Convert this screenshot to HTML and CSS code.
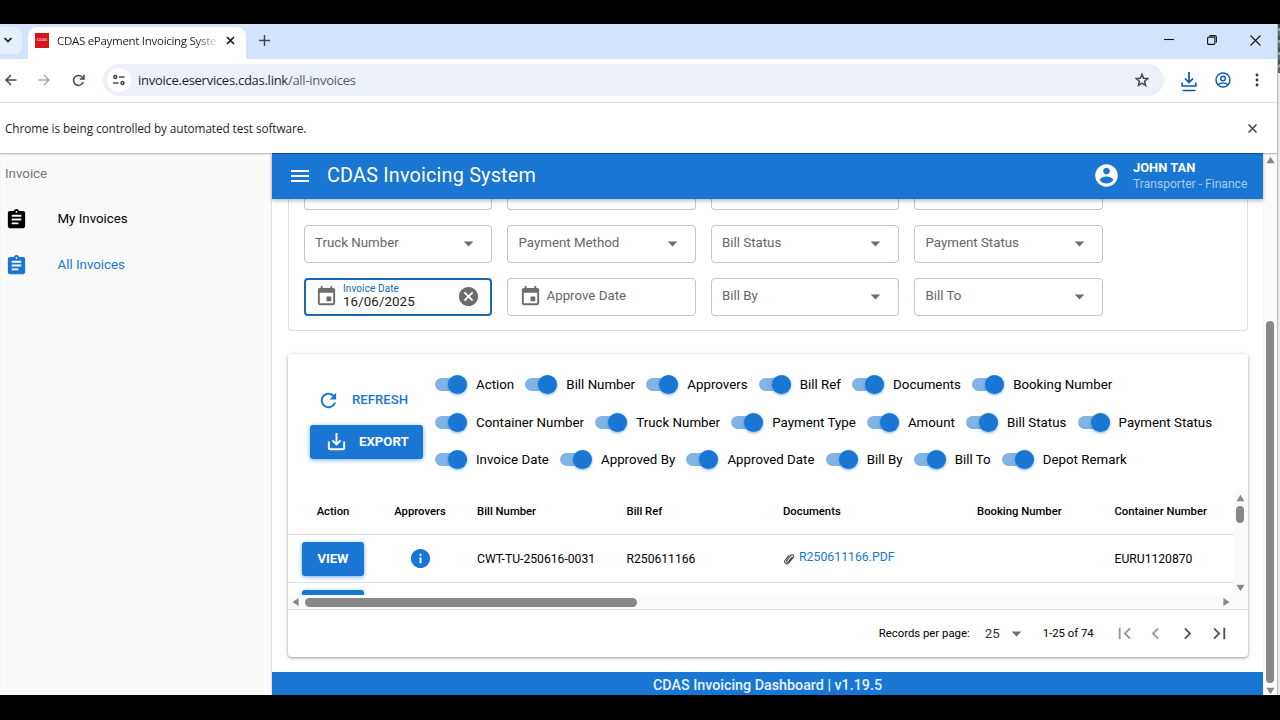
FILE: index.html
```
<!DOCTYPE html>
<html lang="en">
<head>
  <meta charset="utf-8">
  <title>CDAS ePayment Invoicing System</title>
  <link rel="stylesheet" href="styles.css">
</head>
<body>
<!-- shared icons -->
<svg class="defs">
  <symbol id="clip" viewBox="0 0 24 24"><path d="M19 3h-4.180C14.400 1.840 13.300 1 12 1c-1.300 0-2.400.840-2.820 2H5c-1.100 0-2 .900-2 2v14c0 1.100.900 2 2 2h14c1.100 0 2-.900 2-2V5c0-1.100-.900-2-2-2zm-7 0c.550 0 1 .450 1 1s-.450 1-1 1-1-.450-1-1 .450-1 1-1zm2 14H7v-2h7v2zm3-4H7v-2h10v2zm0-4H7V7h10v2z"/></symbol>
  <symbol id="event" viewBox="0 0 24 24"><path d="M17 12h-5v5h5v-5zM16 1v2H8V1H6v2H5c-1.110 0-1.990.900-1.990 2L3 19c0 1.100.890 2 2 2h14c1.100 0 2-.900 2-2V5c0-1.100-.900-2-2-2h-1V1h-2zm3 18H5V8h14v11z"/></symbol>
  <symbol id="drop" viewBox="0 0 24 24"><path d="M7 10l5 5 5-5z"/></symbol>
  <symbol id="tri" viewBox="0 0 10 8"><path d="M5 .5L9.500 7.500H.5z"/></symbol>
</svg>

<div class="window">
  <div class="tabstrip">
    <div class="tabsearch"><svg width="10" height="10" viewBox="0 0 10 10"><path d="M1.500 3L5 6.500 8.500 3" class="ln dark w2"/></svg></div>
    <div class="tab">
      <div class="favicon">CDAS</div>
      <div class="tabtitle">CDAS ePayment Invoicing Syste</div>
      <svg width="9" height="9" viewBox="0 0 9 9"><path d="M1 1l7 7M8 1L1 8" class="ln dark w2"/></svg>
    </div>
    <svg class="plus" width="11" height="11" viewBox="0 0 11 11"><path d="M5.500 0v11M0 5.500h11" class="ln"/></svg>
    <div class="winbtns">
      <svg width="10" height="10" viewBox="0 0 10 10"><path d="M0 4.500h10" class="ln dark w1"/></svg>
      <svg width="10" height="10" viewBox="0 0 10 10"><rect x=".6" y="2.100" width="7.300" height="7.300" rx="1.200" class="ln dark w1"/><path d="M2.500.6H7.400a2 2 0 0 1 2 2V7.500" class="ln dark w1"/></svg>
      <svg width="11" height="11" viewBox="0 0 11 11"><path d="M.5.5l10 10M10.500.5l-10 10" class="ln dark w1"/></svg>
    </div>
  </div>

  <div class="toolbar">
    <svg class="back" width="12" height="12" viewBox="0 0 12 12"><path d="M11.500 6H1M6 1L1 6l5 5" class="ln"/></svg>
    <svg class="fwd" width="12" height="12" viewBox="0 0 12 12"><path d="M.5 6H11M6 1l5 5-5 5" class="ln faint"/></svg>
    <svg class="reload" width="13" height="13" viewBox="0 0 13 13"><path d="M11.300 8A5 5 0 1 1 10.600 3.500L11.800 4.700M12 .8V5H7.800" class="ln"/></svg>
    <div class="omnibox">
      <div class="site"><svg width="14" height="12" viewBox="0 0 14 12"><circle cx="3.300" cy="3" r="1.500" class="ln"/><path d="M7 3h5.500M1 9h5.500" class="ln"/><circle cx="10.500" cy="9" r="1.500" class="ln"/></svg></div>
      <div class="url">invoice.eservices.cdas.link<span>/all-invoices</span></div>
      <svg width="14" height="14" viewBox="0 0 14 14"><path d="M7 1.300l1.600 3.900 4.200.3-3.200 2.700 1 4.100L7 10.100l-3.600 2.200 1-4.100L1.200 5.500l4.200-.3z" class="ln"/></svg>
    </div>
    <svg class="dl" width="16" height="20" viewBox="0 0 16 20"><path d="M8 0v10M4 6.500l4 4 4-4M1.200 10.500V14h13.600v-3.500M1.500 18.500h13" class="ln blue"/></svg>
    <svg class="user" width="16" height="16" viewBox="0 0 16 16"><circle cx="8" cy="8" r="7" class="ln blue thin"/><circle cx="8" cy="6.500" r="2.300" class="ln blue thin"/><path d="M3.300 12.800c2.500-2.600 6.900-2.600 9.400 0" class="ln blue thin"/></svg>
    <svg class="kebab" width="4" height="14" viewBox="0 0 4 14"><circle cx="2" cy="2" r="1.400"/><circle cx="2" cy="7" r="1.400"/><circle cx="2" cy="12" r="1.400"/></svg>
  </div>

  <div class="infobar">
    <span>Chrome is being controlled by automated test software.</span>
    <svg width="9" height="9" viewBox="0 0 9 9"><path d="M.5.5l8 8M8.500.5l-8 8" class="ln"/></svg>
  </div>

  <div class="page">
    <div class="drawer">
      <div class="drawer-head">Invoice</div>
      <div class="nav"><svg><use href="#clip"/></svg>My Invoices</div>
      <div class="nav active"><svg><use href="#clip"/></svg>All Invoices</div>
    </div>

    <div class="main">
      <div class="header">
        <svg class="burger" width="18" height="12" viewBox="0 0 18 12"><path d="M0 1h18M0 6h18M0 11h18"/></svg>
        <div class="title">CDAS Invoicing System</div>
        <svg class="avatar" viewBox="0 0 24 24"><path d="M12 2C6.480 2 2 6.480 2 12s4.480 10 10 10 10-4.480 10-10S17.520 2 12 2zm0 3c1.660 0 3 1.340 3 3s-1.340 3-3 3-3-1.340-3-3 1.340-3 3-3zm0 14.200c-2.500 0-4.710-1.280-6-3.220.030-1.990 4-3.080 6-3.080 1.990 0 5.970 1.090 6 3.080-1.290 1.940-3.500 3.220-6 3.220z"/></svg>
        <div class="who"><b>JOHN TAN</b><span>Transporter - Finance</span></div>
      </div>

      <div class="content">
        <div class="filters">
          <div class="field cut"></div><div class="field cut"></div><div class="field cut"></div><div class="field cut"></div>
          <div class="field"><span>Truck Number</span><svg><use href="#drop"/></svg></div>
          <div class="field"><span>Payment Method</span><svg><use href="#drop"/></svg></div>
          <div class="field"><span>Bill Status</span><svg><use href="#drop"/></svg></div>
          <div class="field"><span>Payment Status</span><svg><use href="#drop"/></svg></div>
          <div class="field focus">
            <svg class="cal"><use href="#event"/></svg>
            <span><small>Invoice Date</small>16/06/2025</span>
            <svg viewBox="0 0 24 24"><path d="M12 2C6.470 2 2 6.470 2 12s4.470 10 10 10 10-4.470 10-10S17.530 2 12 2zm5 13.590L15.590 17 12 13.410 8.410 17 7 15.590 10.590 12 7 8.410 8.410 7 12 10.590 15.590 7 17 8.410 13.410 12 17 15.590z"/></svg>
          </div>
          <div class="field"><svg class="cal"><use href="#event"/></svg><span>Approve Date</span></div>
          <div class="field"><span>Bill By</span><svg><use href="#drop"/></svg></div>
          <div class="field"><span>Bill To</span><svg><use href="#drop"/></svg></div>
        </div>

        <div class="card">
          <div class="top">
            <div class="btns">
              <div class="btn flat"><svg viewBox="0 0 24 24"><path d="M17.650 6.350C16.200 4.900 14.210 4 12 4c-4.420 0-7.990 3.580-7.990 8s3.570 8 7.990 8c3.730 0 6.840-2.550 7.730-6h-2.080c-.820 2.330-3.040 4-5.650 4-3.310 0-6-2.690-6-6s2.690-6 6-6c1.660 0 3.140.690 4.220 1.780L13 11h7V4l-2.350 2.350z"/></svg>REFRESH</div>
              <div class="btn solid"><svg viewBox="0 0 24 24"><path d="M19 12v7H5v-7H3v7c0 1.100.900 2 2 2h14c1.100 0 2-.900 2-2v-7h-2zm-6 .670l2.590-2.580L17 11.500l-5 5-5-5 1.410-1.410L11 12.670V3h2v9.670z"/></svg>EXPORT</div>
            </div>
            <div class="toggles">
              <div class="trow">
                <label class="tg"><i></i>Action</label>
                <label class="tg"><i></i>Bill Number</label>
                <label class="tg"><i></i>Approvers</label>
                <label class="tg"><i></i>Bill Ref</label>
                <label class="tg"><i></i>Documents</label>
                <label class="tg"><i></i>Booking Number</label>
              </div>
              <div class="trow">
                <label class="tg"><i></i>Container Number</label>
                <label class="tg"><i></i>Truck Number</label>
                <label class="tg"><i></i>Payment Type</label>
                <label class="tg"><i></i>Amount</label>
                <label class="tg"><i></i>Bill Status</label>
                <label class="tg"><i></i>Payment Status</label>
              </div>
              <div class="trow">
                <label class="tg"><i></i>Invoice Date</label>
                <label class="tg"><i></i>Approved By</label>
                <label class="tg"><i></i>Approved Date</label>
                <label class="tg"><i></i>Bill By</label>
                <label class="tg"><i></i>Bill To</label>
                <label class="tg"><i></i>Depot Remark</label>
              </div>
            </div>
          </div>

          <div class="tablebox">
            <div class="scroller">
              <table>
                <colgroup><col class="c1"><col class="c2"><col class="c3"><col class="c4"><col class="c5"><col class="c6"><col></colgroup>
                <tr><th class="mid">Action</th><th class="mid">Approvers</th><th>Bill Number</th><th>Bill Ref</th><th>Documents</th><th>Booking Number</th><th>Container Number</th></tr>
                <tr>
                  <td class="mid"><div class="view">VIEW</div></td>
                  <td class="mid"><svg class="info" viewBox="0 0 24 24"><path d="M12 2C6.480 2 2 6.480 2 12s4.480 10 10 10 10-4.480 10-10S17.520 2 12 2zm1 15h-2v-6h2v6zm0-8h-2V7h2v2z"/></svg></td>
                  <td>CWT-TU-250616-0031</td>
                  <td>R250611166</td>
                  <td><div class="doc"><svg width="12" height="13" viewBox="0 0 12 13"><path d="M9.300 4.800L5.400 9.800c-.9 1.100-2.500-.1-1.700-1.200l4.200-5.400c1.300-1.500 3.700.2 2.500 1.900L5.800 11c-1.900 2.200-5.400-.3-3.700-2.800L6 3.200" class="ln w1"/></svg><a>R250611166.PDF</a></div></td>
                  <td></td>
                  <td>EURU1120870</td>
                </tr>
                <tr><td class="mid"><div class="view"></div></td><td></td><td></td><td></td><td></td><td></td><td></td></tr>
              </table>
            </div>
            <div class="vbar"><svg><use href="#tri"/></svg><i></i><svg class="down"><use href="#tri"/></svg></div>
          </div>
          <div class="hbar"><svg class="left"><use href="#tri"/></svg><i></i><svg class="right"><use href="#tri"/></svg></div>
          <div class="pager">
            <span class="rpp">Records per page:</span>
            <span class="n">25</span>
            <svg class="pd"><use href="#drop"/></svg>
            <span class="range">1-25 of 74</span>
            <svg class="pg off" viewBox="0 0 24 24"><path d="M18.410 16.590L13.820 12l4.590-4.590L17 6l-6 6 6 6zM6 6h2v12H6z"/></svg>
            <svg class="pg off" viewBox="0 0 24 24"><path d="M15.410 7.410L14 6l-6 6 6 6 1.410-1.410L10.830 12z"/></svg>
            <svg class="pg" viewBox="0 0 24 24"><path d="M10 6L8.590 7.410 13.170 12l-4.580 4.590L10 18l6-6z"/></svg>
            <svg class="pg" viewBox="0 0 24 24"><path d="M5.590 7.410L10.180 12l-4.590 4.590L7 18l6-6-6-6zM16 6h2v12h-2z"/></svg>
          </div>
        </div>
      </div>
      <div class="footer">CDAS Invoicing Dashboard | v1.19.5</div>
    </div>

    <div class="pagebar"><svg><use href="#tri"/></svg><i></i><svg class="down"><use href="#tri"/></svg></div>
  </div>
</div>
<!-- sliver of the window behind -->
<div class="behind"><i></i></div>
</body>
</html>
```
FILE: styles.css
```
* {box-sizing:border-box;}
body {margin:0; width:1280px; height:720px; overflow:hidden; background:#000; padding:24px 0 25px; display:flex; font-family:Roboto,sans-serif; color:#000;}
svg {flex:none; display:block;}
svg.defs {position:absolute; width:0; height:0;}
.window {width:1277px; height:671px; background:#fff; display:flex; flex-direction:column;}
.behind {width:3px; height:671px; background:#e9e9e9; border-left:1px solid #bbb;}
.behind i {display:block; height:49px; background:repeating-linear-gradient(170deg,#35565c 0 4px,#8ba5a5 4px 7px,#52706f 7px 12px);}

/* line icons */
.ln {fill:none; stroke:#474747; stroke-width:1.5;}
.dark {stroke:#111;}
.w2 {stroke-width:1.6;}
.w1 {stroke-width:1.1;}
.faint {stroke:#aaa;}
.blue {stroke:#0b57b0; stroke-width:1.7;}
.thin {stroke-width:1.4;}

/* browser chrome */
.tabstrip {height:35px; flex:none; background:#d3e3fd; display:flex; align-items:flex-start; font-family:"Open Sans",sans-serif;}
.tabsearch {width:22px; height:27px; margin-top:3px; background:#e6effd; border-radius:0 8px 8px 0; padding:8px 0 0 3px;}
.tab {width:218px; height:32px; margin:3px 0 0 6px; background:#fff; border-radius:9px 9px 0 0; display:flex; align-items:center; padding:0 0 6px 7px;}
.favicon {width:14px; height:15px; background:#d3151d; color:#f3b0b0; font-size:4px; font-weight:bold; text-align:center; line-height:14px;}
.tabtitle {width:159px; margin:0 10px 0 8px; font-size:11.5px; letter-spacing:-.29px; white-space:nowrap; color:#1f1f1f; -webkit-mask-image:linear-gradient(90deg,#000 138px,transparent 163px);}
.plus {margin:11px 0 0 13px;}
.winbtns {margin:11px 16px 0 auto; display:flex; gap:33px;}
.toolbar {height:44px; flex:none; display:flex; align-items:center; border-bottom:1px solid #dcdfe3; padding-bottom:1px; font-family:"Open Sans",sans-serif;}
.back {margin-left:5px;}
.fwd {margin-left:21px;}
.reload {margin-left:22px;}
.omnibox {width:1061px; height:32px; margin-left:18px; border-radius:16px; background:#ecf1f8; display:flex; align-items:center; padding:0 15px 0 4px;}
.site {width:24px; height:24px; border-radius:12px; background:#fff; display:flex; align-items:center; justify-content:center;}
.url {flex:1; margin-left:7px; font-size:13px; letter-spacing:-.27px; color:#1f1f1f;}
.url span {color:#5a5d61;}
.dl {margin:3px 0 0 17px;}
.user {margin-left:18px;}
.kebab {margin-left:24px; fill:#333;}
.infobar {height:50px; flex:none; display:flex; align-items:center; justify-content:space-between; padding:0 20px 0 5px; font-family:"Open Sans",sans-serif; font-size:11.800px; letter-spacing:-.09px; color:#1f1f1f;}

/* page */
.page {height:542px; display:flex; overflow:hidden; box-shadow:inset 0 2px 2px -1px rgba(0,0,0,.35);}
.drawer {width:272px; height:542px; background:#fafafa; border-right:1px solid #e2e2e2; font-size:13.300px; box-shadow:inset 0 2px 2px -1px rgba(0,0,0,.3);}
.drawer-head {height:43px; padding:13px 0 0 5px; color:#757575;}
.nav {height:45.500px; display:flex; align-items:center;}
.nav svg {width:23px; height:23px; margin:2px 30px 0 4.500px;}
.active {color:#1976d2; fill:#1976d2;}
.main {width:991px; display:flex; flex-direction:column;}
.header {height:46px; flex:none; background:#1976d2; color:#fff; display:flex; align-items:center; box-shadow:0 2px 4px rgba(0,0,0,.25),inset 0 2px 1px -1px rgba(0,0,0,.35); z-index:1; padding:0 0 1px 19px;}
.burger {stroke:#fff; stroke-width:1.900;}
.title {flex:1; margin-left:18px; font-size:19.800px; letter-spacing:.2px;}
.avatar {width:27px; height:27px; fill:#fff;}
.who {width:130px; margin-left:13px; font-size:12.100px; line-height:16px; display:flex; flex-direction:column;}
.who b {font-size:12.900px;}
.who span {color:#a9cbef;}
.content {height:472.500px; padding:0 16px 0 15.500px; overflow:hidden;}
.filters {width:960px; height:132px; border:1px solid #ddd; border-top:0; border-radius:0 0 4px 4px; padding-left:15px; display:grid; grid-template-columns:repeat(4,188.500px); grid-template-rows:10.500px 38px 38px; column-gap:15px; row-gap:15px;}
.field {border:1px solid #c4c4c4; border-radius:4px; display:flex; align-items:center; padding:0 11px 0 10.500px; font-size:13.300px; color:#666;}
.field.cut {border-top:0; border-radius:0 0 4px 4px;}
.field span {flex:1; margin-top:-2px;}
.field svg {width:23px; height:23px; fill:#6d6d6d;}
.field .cal {margin-right:5px;}
.field.focus {border:2px solid #1968b3; padding:0 10px 0 9.500px;}
.focus span {color:#222; line-height:13px; margin-top:-2px; letter-spacing:.1px;}
.focus small {display:block; color:#1968b3; font-size:10px; line-height:12px;}

.card {width:960px; height:303.500px; margin-top:22.500px; background:#fff; border-radius:4px; box-shadow:0 1px 4px rgba(0,0,0,.25),0 1px 2px rgba(0,0,0,.2);}
.top {height:136px; display:flex; padding-top:12px;}
.btns {width:113px; margin:19px 12px 0 22.500px;}
.btn {height:34px; display:flex; align-items:center; font-size:13.200px; font-weight:500; border-radius:3px;}
.btn svg {width:23px; height:23px;}
.flat {height:30px; color:#1976d2; fill:#1976d2; padding-left:7px; margin-bottom:10px;}
.flat svg {margin:1px 12px 0 0;}
.solid {background:#1976d2; color:#fff; fill:#fff; font-weight:700; padding-left:15px; box-shadow:0 1px 4px rgba(25,118,210,.6);}
.solid svg {margin-right:11px;}
.trow {display:flex; height:37.700px; gap:11.200px;}
.tg {display:flex; align-items:center; font-size:13.300px; white-space:nowrap;}
.tg i {width:32px; height:13px; margin-right:9px; border-radius:7px; background:#82b3e5; display:flex; align-items:center; justify-content:flex-end;}
.tg i::after {content:""; width:19px; height:19px; border-radius:50%; background:#1976d2; box-shadow:0 1px 3px rgba(25,118,210,.6);}

.tablebox {height:105.500px; display:flex;}
.scroller {width:946px; height:105.500px; overflow:hidden;}
table {width:946px; table-layout:fixed; border-collapse:collapse; font-size:12.150px;}
.c1 {width:91px;} .c2 {width:83px;} .c3 {width:149.500px;} .c4 {width:156.500px;} .c5 {width:194px;} .c6 {width:137.500px;}
th {height:45px; font-size:11.300px; font-weight:500;}
th,td {text-align:left; padding:0 0 0 15.500px; border-bottom:1px solid #e0e0e0; white-space:nowrap;}
td {height:48px;}
th.mid,td.mid {text-align:center; padding:0;}
.view {width:62px; height:34px; margin:auto; border-radius:3px; background:#1976d2; color:#fff; font-size:13px; font-weight:700; line-height:34px; box-shadow:0 1px 4px rgba(25,118,210,.6);}
.info {width:23px; height:23px; margin:auto; fill:#1976d2;}
.doc {display:flex; align-items:center; margin-top:-4px;}
.doc svg {margin:3px 4px 0 0;}
.doc a {color:#1976d2; font-size:12.300px;}

/* scrollbars */
.vbar {width:14px; display:flex; flex-direction:column; align-items:center; background:#fbfbfb; padding:4px 1px 3px 0;}
.vbar svg,.hbar svg,.pagebar svg {width:9px; height:8px; fill:#888;}
.vbar i {width:8px; height:17px; margin-top:4px; border-radius:4px; background:#888;}
.down {transform:rotate(180deg); margin-top:auto;}
.hbar {height:15px; display:flex; align-items:center; background:#fbfbfb; border-bottom:1px solid #ddd; padding:0 17px 0 3px;}
.hbar i {width:332px; height:9px; margin-left:5px; border-radius:5px; background:#888;}
.left {transform:rotate(-90deg);}
.right {transform:rotate(90deg); margin-left:auto;}
.pager {height:47px; display:flex; align-items:center; justify-content:flex-end; padding-right:17px; font-size:11.350px;}
.pager span {margin-top:-1px;}
.n {font-size:13.300px; margin-left:15px; color:#333;}
.pd {width:23px; height:23px; margin-left:5px; fill:#6d6d6d;}
.range {margin:0 19px 0 15px;}
.pg {width:23px; height:23px; margin-left:8.600px; fill:#555;}
.range + .pg {margin-left:0;}
.pg.off {fill:#999;}
.footer {height:23.500px; background:#1976d2; color:#e6f3ff; text-align:center; font-size:14.300px; font-weight:500; line-height:27px; overflow:hidden;}
.pagebar {width:14px; height:542px; background:#fbfbfb; display:flex; flex-direction:column; align-items:center; padding-top:3px; box-shadow:inset 0 2px 2px -1px rgba(0,0,0,.3);}
.pagebar i {width:8px; height:362px; margin-top:157px; border-radius:4px; background:#888;}
.pagebar .down {margin-top:4px;}
```
